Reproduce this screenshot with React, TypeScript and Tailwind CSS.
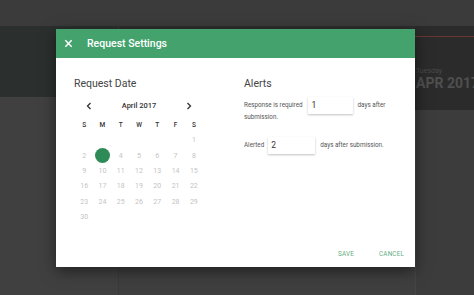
const days: (number | null)[] = [
  null, null, null, null, null, null, 1,
  2, 3, 4, 5, 6, 7, 8,
  9, 10, 11, 12, 13, 14, 15,
  16, 17, 18, 19, 20, 21, 22,
  23, 24, 25, 26, 27, 28, 29,
  30, null, null, null, null, null, null,
];

const weekdays = ['S', 'M', 'T', 'W', 'T', 'F', 'S'];

const App: React.FC = () => {
  return (
    <div
      className="relative w-[474px] h-[295px] overflow-hidden flex flex-col bg-[#3e3e3e]"
      style={{ fontFamily: 'Roboto, "Liberation Sans", sans-serif' }}
    >
      {/* fondo de la app */}
      <div className="h-[26px] bg-[#3b3b3b]" />
      <div className="flex flex-1">
        <div className="w-[118px] flex flex-col">
          <div className="h-[71px] bg-[#2b302e]" />
          <div className="flex-1 bg-[#404040]" />
        </div>
        <div className="flex-1 flex flex-col border-l border-[#3a3a3a]">
          <div className="h-[71px] bg-[#2e2e2e]" />
          <div className="flex-1 bg-[#3f3f3f]" />
        </div>
        <div className="w-[59px] flex flex-col">
          <div className="h-[84px] bg-[#2b2b2b] pt-[10px] overflow-hidden">
            <div className="h-px bg-[#6b3535]" />
            <div className="mt-[30px] pl-px text-[7px] leading-[8px] text-[#4a4a4a]">Tuesday</div>
            <div className="pl-px text-[14px] leading-[17px] font-bold text-[#4f4f4f] whitespace-nowrap">APR 2017</div>
          </div>
          <div className="flex-1 bg-[#3c3c3c] border-l border-[#454545]" />
        </div>
      </div>

      {/* Diálogo */}
      <div className="absolute left-[56px] top-[29px] w-[359px] h-[238px] bg-white flex flex-col shadow-[0_4px_14px_rgba(0,0,0,0.5)]">
        <div className="h-[29px] bg-[#44a36d] flex items-center text-white">
          <svg width="9" height="9" viewBox="0 0 10 10" className="ml-[8px]">
            <path d="M1.5 1.5 L8.5 8.5 M8.5 1.5 L1.5 8.5" stroke="white" strokeWidth="1.6" />
          </svg>
          <span className="ml-[14px] text-[10.5px] font-medium">Request Settings</span>
        </div>

        <div className="flex flex-1 px-[18px] pt-[19px]">
          {/* Columna izquierda: calendario */}
          <div className="w-[170px]">
            <div className="text-[10.5px] leading-[14px] text-[#444]">Request Date</div>
            <div className="w-[128px] ml-px mt-[8px]">
              <div className="flex items-center justify-between h-[14px] px-[11px] text-[#333]">
                <svg width="6" height="8" viewBox="0 0 6 8">
                  <path d="M4.5 1 L1.5 4 L4.5 7" stroke="#333" strokeWidth="1.3" fill="none" />
                </svg>
                <span className="text-[7.5px] font-medium">April 2017</span>
                <svg width="6" height="8" viewBox="0 0 6 8">
                  <path d="M1.5 1 L4.5 4 L1.5 7" stroke="#333" strokeWidth="1.3" fill="none" />
                </svg>
              </div>
              <div className="grid grid-cols-7 mt-[5px]">
                {weekdays.map((d, i) => (
                  <div key={i} className="h-[15px] flex items-center justify-center text-[6.5px] font-medium text-[#333]">
                    {d}
                  </div>
                ))}
                {days.map((d, i) => (
                  <div key={i} className="h-[15.3px] flex items-center justify-center">
                    {d === 3 ? (
                      <div className="w-[15px] h-[15px] rounded-full bg-[#2e8a56]" />
                    ) : (
                      <span className="text-[7px] text-[#c4c4c4]">{d ?? ''}</span>
                    )}
                  </div>
                ))}
              </div>
            </div>
          </div>

          {/* Columna derecha: alertas */}
          <div className="flex-1">
            <div className="text-[10.5px] leading-[14px] text-[#444]">Alerts</div>
            <div className="mt-[6px] text-[6.3px] text-[#555]">
              <div className="flex items-center">
                <span>Response is required</span>
                <div className="ml-[5px] w-[45px] h-[17px] flex items-center pl-[4px] text-[8.5px] text-[#333] bg-white shadow-[0_1px_2px_rgba(0,0,0,0.25)]">1</div>
                <span className="ml-[5px]">days after</span>
              </div>
              <div className="-mt-[1px] leading-[9px]">submission.</div>
              <div className="flex items-center mt-[15px]">
                <span>Alerted</span>
                <div className="ml-[4px] w-[47px] h-[17px] flex items-center pl-[3px] text-[8.5px] text-[#333] bg-white shadow-[0_1px_2px_rgba(0,0,0,0.25)]">2</div>
                <span className="ml-[5px]">days after submission.</span>
              </div>
            </div>
          </div>
        </div>

        <div className="flex justify-end items-center h-[24px] pr-[11px] text-[6.3px] text-[#5fae82] tracking-[0.2px]">
          <span>SAVE</span>
          <span className="ml-[25px]">CANCEL</span>
        </div>
      </div>
    </div>
  );
};

export default App;
